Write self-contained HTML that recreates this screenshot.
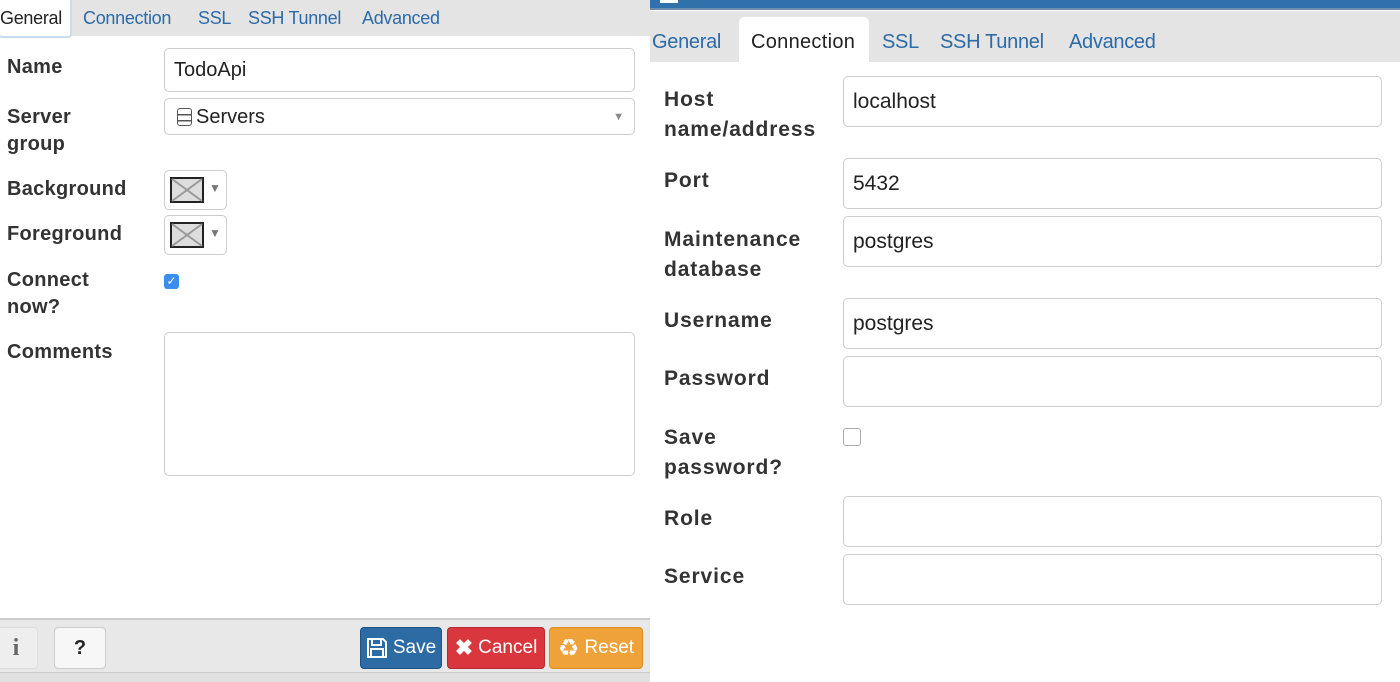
<!DOCTYPE html>
<html><head><style>
*{box-sizing:border-box;margin:0;padding:0}
body{width:1400px;height:682px;position:relative;overflow:hidden;background:#fff;font-family:"Liberation Sans",sans-serif;color:#222}
.a{position:absolute}
.tab{position:absolute;font-size:18px;color:#2c6aa8;letter-spacing:-0.3px}
.lbl{position:absolute;font-size:20px;font-weight:bold;color:#333;line-height:27px;letter-spacing:0.3px}
.r{font-size:21px;letter-spacing:0.9px}
.inp{position:absolute;border:1px solid #ccc;border-radius:5px;background:#fff;font-size:20px;color:#222;padding-left:9px}
.btn{position:absolute;border-radius:4px;color:#fff;font-size:19px;display:flex;align-items:center;justify-content:center;gap:5px}
</style></head><body>
<!-- left panel -->
<div class="a" style="left:0;top:0;width:650px;height:36px;background:#e4e4e4"></div>
<div class="a" style="left:-2px;top:0;width:74px;height:38px;background:#fff;border:2px solid #c9dcef;border-top:none;border-radius:0 0 4px 4px"></div>
<div class="tab" style="left:0;top:8px;color:#222">General</div>
<div class="tab" style="left:83px;top:8px">Connection</div>
<div class="tab" style="left:198px;top:8px">SSL</div>
<div class="tab" style="left:248px;top:8px">SSH Tunnel</div>
<div class="tab" style="left:362px;top:8px">Advanced</div>

<div class="lbl" style="left:7px;top:54px">Name</div>
<div class="inp" style="left:164px;top:48px;width:471px;height:44px;line-height:42px">TodoApi</div>
<div class="lbl" style="left:7px;top:104px">Server<br>group</div>
<div class="inp" style="left:164px;top:98px;width:471px;height:37px;line-height:36px;padding-left:12px"><span style="display:inline-block;width:15px;height:18px;border:1.5px solid #555;border-radius:3px;vertical-align:-3px;margin-right:4px;background:linear-gradient(#fff 5px,#555 5px,#555 6.5px,#fff 6.5px,#fff 11px,#555 11px,#555 12.5px,#fff 12.5px)"></span>Servers<span style="position:absolute;right:10px;top:0;font-size:11px;color:#888">▼</span></div>
<div class="lbl" style="left:7px;top:176px">Background</div>
<div class="lbl" style="left:7px;top:221px">Foreground</div>
<div class="inp" style="left:164px;top:170px;width:63px;height:40px;padding:0"></div>
<div class="inp" style="left:164px;top:215px;width:63px;height:40px;padding:0"></div>
<svg class="a" style="left:170px;top:177px" width="34" height="26"><rect x="1" y="1" width="32" height="24" fill="#ddd" stroke="#222" stroke-width="2"/><path d="M2 2L32 24M32 2L2 24" stroke="#999" stroke-width="2"/></svg>
<svg class="a" style="left:170px;top:222px" width="34" height="26"><rect x="1" y="1" width="32" height="24" fill="#ddd" stroke="#222" stroke-width="2"/><path d="M2 2L32 24M32 2L2 24" stroke="#999" stroke-width="2"/></svg>
<div class="a" style="left:209px;top:181px;font-size:12px;color:#777">▼</div>
<div class="a" style="left:209px;top:226px;font-size:12px;color:#777">▼</div>
<div class="lbl" style="left:7px;top:267px">Connect<br>now?</div>
<div class="a" style="left:164px;top:274px;width:15px;height:15px;background:#3b8ef0;border-radius:3px;color:#fff;font-size:12px;line-height:15px;text-align:center">✓</div>
<div class="lbl" style="left:7px;top:339px">Comments</div>
<div class="inp" style="left:164px;top:332px;width:471px;height:144px"></div>

<div class="a" style="left:0;top:618px;width:650px;height:64px;background:#e8e8e8;border-top:2px solid #ccc"></div>
<div class="a" style="left:0;top:672px;width:650px;height:10px;background:#e0e0e0;border-top:1px solid #ccc"></div>
<div class="btn" style="left:-6px;top:627px;width:44px;height:42px;background:#eee;border:1px solid #ddd;color:#666;font-weight:bold;font-size:24px;font-family:'Liberation Serif',serif">i</div>
<div class="btn" style="left:54px;top:627px;width:52px;height:42px;background:#f7f7f7;border:1px solid #ccc;color:#222;font-weight:bold;font-size:20px">?</div>
<div class="btn" style="left:360px;top:627px;width:82px;height:42px;background:#2c6ba4;border:1px solid #1e5283"><svg width="22" height="22" viewBox="0 0 22 22"><path d="M2 2h15l3 3v15H2z" fill="none" stroke="#fff" stroke-width="2"/><rect x="6" y="2" width="9" height="6" fill="none" stroke="#fff" stroke-width="2"/><rect x="5" y="12" width="12" height="8" fill="none" stroke="#fff" stroke-width="2"/></svg>Save</div>
<div class="btn" style="left:447px;top:627px;width:98px;height:42px;background:#d9363e;border:1px solid #b52a31"><b style="font-size:22px">✖</b>Cancel</div>
<div class="btn" style="left:549px;top:627px;width:94px;height:42px;background:#f0a23a;border:1px solid #e08e20"><span style="font-size:24px">♻</span>Reset</div>

<!-- right panel -->
<div class="a" style="left:650px;top:0;width:750px;height:682px;background:#fff"></div>
<div class="a" style="left:650px;top:0;width:750px;height:10px;background:#3070ab;border-bottom:2px solid #6d8eae"></div>
<div class="a" style="left:660px;top:0;width:18px;height:3px;background:#fff"></div>
<div class="a" style="left:650px;top:11px;width:750px;height:51px;background:#e4e4e4"></div>
<div class="a" style="left:650px;top:62px;width:10px;height:620px;background:#fff"></div>
<div class="a" style="left:739px;top:17px;width:130px;height:46px;background:#fff;border-radius:5px 5px 0 0"></div>
<div class="tab" style="left:652px;top:31px;font-size:20px">General</div>
<div class="tab" style="left:751px;top:31px;font-size:20px;color:#222;letter-spacing:0.3px">Connection</div>
<div class="tab" style="left:882px;top:31px;font-size:20px">SSL</div>
<div class="tab" style="left:940px;top:31px;font-size:20px">SSH Tunnel</div>
<div class="tab" style="left:1069px;top:31px;font-size:20px">Advanced</div>

<div class="lbl r" style="left:664px;top:85px;line-height:30px">Host<br>name/address</div>
<div class="inp" style="left:843px;top:76px;width:539px;height:51px;line-height:49px;font-size:21px">localhost</div>
<div class="lbl r" style="left:664px;top:167px">Port</div>
<div class="inp" style="left:843px;top:158px;width:539px;height:51px;line-height:49px;font-size:21px">5432</div>
<div class="lbl r" style="left:664px;top:225px;line-height:30px">Maintenance<br>database</div>
<div class="inp" style="left:843px;top:216px;width:539px;height:51px;line-height:49px;font-size:21px">postgres</div>
<div class="lbl r" style="left:664px;top:307px">Username</div>
<div class="inp" style="left:843px;top:298px;width:539px;height:51px;line-height:49px;font-size:21px">postgres</div>
<div class="lbl r" style="left:664px;top:365px">Password</div>
<div class="inp" style="left:843px;top:356px;width:539px;height:51px"></div>
<div class="lbl r" style="left:664px;top:423px;line-height:30px">Save<br>password?</div>
<div class="a" style="left:843px;top:428px;width:18px;height:18px;border:1px solid #aaa;border-radius:3px"></div>
<div class="lbl r" style="left:664px;top:505px">Role</div>
<div class="inp" style="left:843px;top:496px;width:539px;height:51px"></div>
<div class="lbl r" style="left:664px;top:563px">Service</div>
<div class="inp" style="left:843px;top:554px;width:539px;height:51px"></div>
</body></html>
